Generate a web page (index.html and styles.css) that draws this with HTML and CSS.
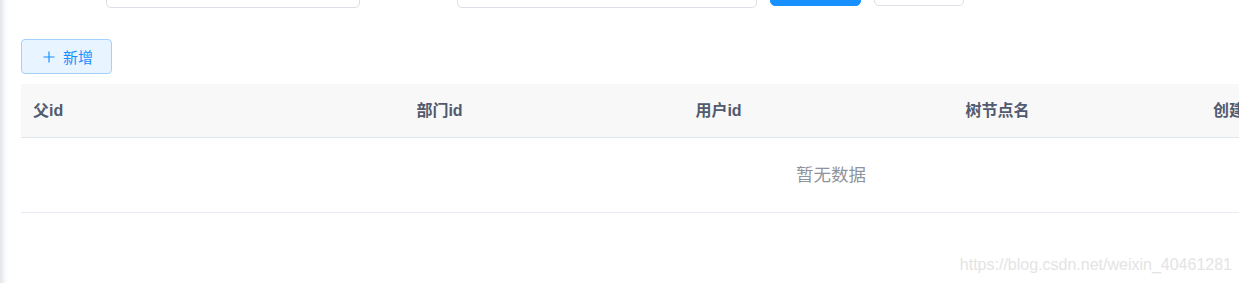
FILE: index.html
```html
<!DOCTYPE html>
<html lang="zh-CN">
<head>
    <meta charset="UTF-8">
    <meta name="viewport" content="width=device-width, initial-scale=1.0">
    <title>树节点管理</title>
    <link rel="stylesheet" href="styles.css">
</head>
<body>
    <div class="app-main">
        <div class="app-container">
            <!-- 查询条件 -->
            <form class="search-form">
                <div class="form-item">
                    <span class="form-label"></span>
                    <input class="form-input input-short" type="text">
                </div>
                <div class="form-item">
                    <span class="form-label"></span>
                    <input class="form-input input-long" type="text">
                </div>
                <div class="form-item form-buttons">
                    <button type="button" class="btn btn-primary"></button>
                    <button type="button" class="btn btn-default"></button>
                </div>
            </form>

            <!-- 工具栏 -->
            <div class="toolbar">
                <button type="button" class="btn-add">
                    <svg class="icon-plus" viewBox="0 0 12 12" width="12" height="12">
                        <path d="M6 0.5V11.5M0.5 6H11.5" stroke="#1890ff" stroke-width="1.2" fill="none"/>
                    </svg>
                    <span>新增</span>
                </button>
            </div>

            <!-- 数据表格 -->
            <table class="data-table">
                <colgroup>
                    <col style="width: 279px">
                    <col style="width: 279px">
                    <col style="width: 279px">
                    <col style="width: 279px">
                    <col style="width: 216px">
                    <col style="width: 288px">
                </colgroup>
                <thead>
                    <tr>
                        <th class="align-left">父id</th>
                        <th>部门id</th>
                        <th>用户id</th>
                        <th>树节点名</th>
                        <th>创建时间</th>
                        <th>操作</th>
                    </tr>
                </thead>
                <tbody>
                    <tr class="empty-row">
                        <td colspan="6">暂无数据</td>
                    </tr>
                </tbody>
            </table>
        </div>

        <div class="watermark">https://blog.csdn.net/weixin_40461281</div>
    </div>
</body>
</html>
```

FILE: styles.css
```css
html, body {
    margin: 0;
    padding: 0;
    background: #fff;
}

body {
    font-family: "Liberation Sans", "Noto Sans CJK SC", Arial, sans-serif;
    overflow: hidden;
}

.app-main {
    position: relative;
    width: 1239px;
    height: 283px;
    overflow: hidden;
    background: linear-gradient(to right, #e3e5e9 0, #eef0f2 3px, #f8f9fa 5px, #fff 8px);
}

.app-container {
    padding-left: 21px;
}

/* 查询条件 */
.search-form {
    display: flex;
    align-items: flex-end;
    height: 8px;
    margin: 0;
}

.form-item {
    display: flex;
    align-items: flex-end;
    margin-right: 12px;
}

.form-label {
    display: inline-block;
    width: 85px;
}

.form-input {
    height: 40px;
    margin: 0;
    padding: 0 15px;
    border: 1px solid #dcdfe6;
    border-radius: 5px;
    box-sizing: border-box;
    background: #fff;
    outline: none;
}

.input-short {
    width: 254px;
}

.input-long {
    width: 300px;
}

.form-buttons {
    margin-left: 1px;
    margin-right: 0;
    padding-bottom: 2px;
    gap: 13px;
}

.btn {
    height: 35px;
    width: 91px;
    border-radius: 5px;
    box-sizing: border-box;
    padding: 0;
    cursor: pointer;
}

.btn-primary {
    background: #1890ff;
    border: 1px solid #1890ff;
}

.btn-default {
    width: 90px;
    background: #fff;
    border: 1px solid #dcdfe6;
}

/* 工具栏 */
.toolbar {
    margin-top: 31px;
    margin-bottom: 10px;
}

.btn-add {
    display: flex;
    align-items: center;
    width: 91px;
    height: 35px;
    padding: 0 0 0 21px;
    box-sizing: border-box;
    background: #e8f4ff;
    border: 1px solid #a3d0fd;
    border-radius: 4px;
    color: #1890ff;
    font-family: "Noto Sans CJK SC", sans-serif;
    font-size: 15px;
    cursor: pointer;
}

.icon-plus {
    margin-right: 8px;
}

/* 数据表格 */
.data-table {
    width: 1620px;
    border-collapse: collapse;
    table-layout: fixed;
}

.data-table th {
    height: 53px;
    padding: 0 12px 3px;
    box-sizing: border-box;
    background: #f8f8f9;
    border-bottom: 1px solid #dfe6ec;
    color: #515a6e;
    font-size: 16px;
    font-weight: bold;
    text-align: center;
    white-space: nowrap;
    overflow: hidden;
}

.data-table th.align-left {
    text-align: left;
}

.empty-row td {
    height: 75px;
    padding: 0 0 2px;
    box-sizing: border-box;
    border-bottom: 1px solid #e6ebf5;
    text-align: center;
    color: #909399;
    font-family: "Noto Sans CJK SC", sans-serif;
    font-size: 17.5px;
}

/* 水印 */
.watermark {
    position: absolute;
    right: 7px;
    bottom: 9px;
    color: #e4e4e4;
    font-family: "Liberation Sans", Arial, sans-serif;
    font-size: 16px;
}
```
